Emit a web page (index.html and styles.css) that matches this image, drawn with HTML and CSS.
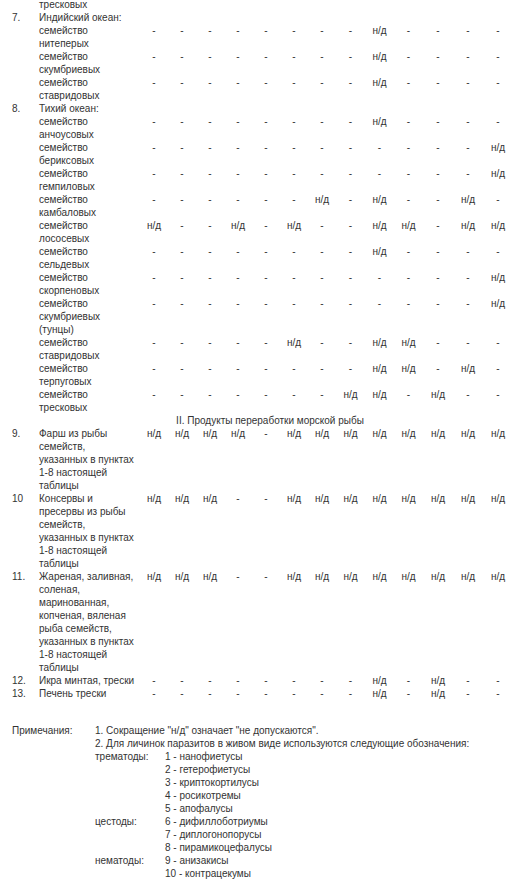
FILE: index.html
```html
<!DOCTYPE html>
<html lang="ru">
<head>
<meta charset="utf-8">
<title>Таблица</title>
<link rel="stylesheet" href="styles.css">
</head>
<body>
<table class="tbl">
<colgroup>
<col class="w-num"><col class="w-name">
<col class="w28"><col class="w28"><col class="w28"><col class="w28"><col class="w28"><col class="w28"><col class="w28">
<col class="w29"><col class="w29"><col class="w29">
<col class="w30"><col class="w30"><col class="w30">
</colgroup>
<tbody>
<tr><td></td><td class="name">тресковых</td><td></td><td></td><td></td><td></td><td></td><td></td><td></td><td></td><td></td><td></td><td></td><td></td><td></td></tr>
<tr><td class="num">7.</td><td class="name">Индийский океан:</td><td></td><td></td><td></td><td></td><td></td><td></td><td></td><td></td><td></td><td></td><td></td><td></td><td></td></tr>
<tr><td></td><td class="name">семейство<br>нитеперых</td><td>-</td><td>-</td><td>-</td><td>-</td><td>-</td><td>-</td><td>-</td><td>-</td><td>н/д</td><td>-</td><td>-</td><td>-</td><td>-</td></tr>
<tr><td></td><td class="name">семейство<br>скумбриевых</td><td>-</td><td>-</td><td>-</td><td>-</td><td>-</td><td>-</td><td>-</td><td>-</td><td>н/д</td><td>-</td><td>-</td><td>-</td><td>-</td></tr>
<tr><td></td><td class="name">семейство<br>ставридовых</td><td>-</td><td>-</td><td>-</td><td>-</td><td>-</td><td>-</td><td>-</td><td>-</td><td>н/д</td><td>-</td><td>-</td><td>-</td><td>-</td></tr>
<tr><td class="num">8.</td><td class="name">Тихий океан:</td><td></td><td></td><td></td><td></td><td></td><td></td><td></td><td></td><td></td><td></td><td></td><td></td><td></td></tr>
<tr><td></td><td class="name">семейство<br>анчоусовых</td><td>-</td><td>-</td><td>-</td><td>-</td><td>-</td><td>-</td><td>-</td><td>-</td><td>н/д</td><td>-</td><td>-</td><td>-</td><td>-</td></tr>
<tr><td></td><td class="name">семейство<br>бериксовых</td><td>-</td><td>-</td><td>-</td><td>-</td><td>-</td><td>-</td><td>-</td><td>-</td><td>-</td><td>-</td><td>-</td><td>-</td><td>н/д</td></tr>
<tr><td></td><td class="name">семейство<br>гемпиловых</td><td>-</td><td>-</td><td>-</td><td>-</td><td>-</td><td>-</td><td>-</td><td>-</td><td>-</td><td>-</td><td>-</td><td>-</td><td>н/д</td></tr>
<tr><td></td><td class="name">семейство<br>камбаловых</td><td>-</td><td>-</td><td>-</td><td>-</td><td>-</td><td>-</td><td>н/д</td><td>-</td><td>н/д</td><td>-</td><td>-</td><td>н/д</td><td>-</td></tr>
<tr><td></td><td class="name">семейство<br>лососевых</td><td>н/д</td><td>-</td><td>-</td><td>н/д</td><td>-</td><td>н/д</td><td>-</td><td>-</td><td>н/д</td><td>н/д</td><td>-</td><td>н/д</td><td>н/д</td></tr>
<tr><td></td><td class="name">семейство<br>сельдевых</td><td>-</td><td>-</td><td>-</td><td>-</td><td>-</td><td>-</td><td>-</td><td>-</td><td>н/д</td><td>-</td><td>-</td><td>-</td><td>-</td></tr>
<tr><td></td><td class="name">семейство<br>скорпеновых</td><td>-</td><td>-</td><td>-</td><td>-</td><td>-</td><td>-</td><td>-</td><td>-</td><td>-</td><td>-</td><td>-</td><td>-</td><td>н/д</td></tr>
<tr><td></td><td class="name">семейство<br>скумбриевых<br>(тунцы)</td><td>-</td><td>-</td><td>-</td><td>-</td><td>-</td><td>-</td><td>-</td><td>-</td><td>-</td><td>-</td><td>-</td><td>-</td><td>н/д</td></tr>
<tr><td></td><td class="name">семейство<br>ставридовых</td><td>-</td><td>-</td><td>-</td><td>-</td><td>-</td><td>н/д</td><td>-</td><td>-</td><td>н/д</td><td>н/д</td><td>-</td><td>-</td><td>-</td></tr>
<tr><td></td><td class="name">семейство<br>терпуговых</td><td>-</td><td>-</td><td>-</td><td>-</td><td>-</td><td>-</td><td>-</td><td>-</td><td>н/д</td><td>н/д</td><td>-</td><td>н/д</td><td>-</td></tr>
<tr><td></td><td class="name">семейство<br>тресковых</td><td>-</td><td>-</td><td>-</td><td>-</td><td>-</td><td>-</td><td>-</td><td>н/д</td><td>н/д</td><td>-</td><td>н/д</td><td>-</td><td>-</td></tr>
<tr><td></td><td class="section" colspan="14">II. Продукты переработки морской рыбы</td></tr>
<tr><td class="num">9.</td><td class="name">Фарш из рыбы<br>семейств,<br>указанных в пунктах<br>1-8 настоящей<br>таблицы</td><td>н/д</td><td>н/д</td><td>н/д</td><td>н/д</td><td>-</td><td>н/д</td><td>н/д</td><td>н/д</td><td>н/д</td><td>н/д</td><td>н/д</td><td>н/д</td><td>н/д</td></tr>
<tr><td class="num">10</td><td class="name">Консервы и<br>пресервы из рыбы<br>семейств,<br>указанных в пунктах<br>1-8 настоящей<br>таблицы</td><td>н/д</td><td>н/д</td><td>н/д</td><td>-</td><td>-</td><td>н/д</td><td>н/д</td><td>н/д</td><td>н/д</td><td>н/д</td><td>н/д</td><td>н/д</td><td>н/д</td></tr>
<tr><td class="num">11.</td><td class="name">Жареная, заливная,<br>соленая,<br>маринованная,<br>копченая, вяленая<br>рыба семейств,<br>указанных в пунктах<br>1-8 настоящей<br>таблицы</td><td>н/д</td><td>н/д</td><td>н/д</td><td>-</td><td>-</td><td>н/д</td><td>н/д</td><td>н/д</td><td>н/д</td><td>н/д</td><td>н/д</td><td>н/д</td><td>н/д</td></tr>
<tr><td class="num">12.</td><td class="name">Икра минтая, трески</td><td>-</td><td>-</td><td>-</td><td>-</td><td>-</td><td>-</td><td>-</td><td>-</td><td>н/д</td><td>-</td><td>н/д</td><td>-</td><td>-</td></tr>
<tr><td class="num">13.</td><td class="name">Печень трески</td><td>-</td><td>-</td><td>-</td><td>-</td><td>-</td><td>-</td><td>-</td><td>-</td><td>н/д</td><td>-</td><td>н/д</td><td>-</td><td>-</td></tr>
</tbody>
</table>

<div class="notes">
  <div class="notes-label">Примечания:</div>
  <div class="notes-wide">1. Сокращение "н/д" означает "не допускаются".</div>
  <div class="notes-wide">2. Для личинок паразитов в живом виде используются следующие обозначения:</div>
  <div class="group">трематоды:</div><div>1 - нанофиетусы</div>
  <div class="group"></div><div>2 - гетерофиетусы</div>
  <div class="group"></div><div>3 - криптокортилусы</div>
  <div class="group"></div><div>4 - росикотремы</div>
  <div class="group"></div><div>5 - апофалусы</div>
  <div class="group">цестоды:</div><div>6 - дифиллоботриумы</div>
  <div class="group"></div><div>7 - диплогонопорусы</div>
  <div class="group"></div><div>8 - пирамикоцефалусы</div>
  <div class="group">нематоды:</div><div>9 - анизакисы</div>
  <div class="group"></div><div>10 - контрацекумы</div>
</div>
</body>
</html>
```

FILE: styles.css
```css
html, body {
  margin: 0;
  padding: 0;
  background: #ffffff;
}

body {
  font-family: "Liberation Sans", Arial, sans-serif;
  font-size: 10px;
  line-height: 13px;
  color: #333333;
}

.tbl {
  table-layout: fixed;
  width: 505px;
  border-collapse: collapse;
  border-spacing: 0;
  margin: -2px 0 0 8px;
  font-size: 10px;
  line-height: 13px;
}

.w-num { width: 29px; }
.w-name { width: 103px; }
.w28 { width: 28px; }
.w29 { width: 29px; }
.w30 { width: 30px; }

.tbl td {
  padding: 0;
  vertical-align: top;
  text-align: center;
  white-space: nowrap;
}

.tbl td.num {
  text-align: left;
  padding-left: 4px;
}

.tbl td.name {
  text-align: left;
  padding-left: 2px;
}

.tbl td.section {
  text-align: center;
  padding-right: 10px;
}

.notes {
  display: grid;
  grid-template-columns: 83px 70px 1fr;
  margin: 24px 0 0 12px;
  line-height: 13px;
}

.notes-label {
  grid-column: 1;
  grid-row: 1;
}

.notes-wide {
  grid-column: 2 / 4;
}

.group {
  grid-column: 2;
}
```
